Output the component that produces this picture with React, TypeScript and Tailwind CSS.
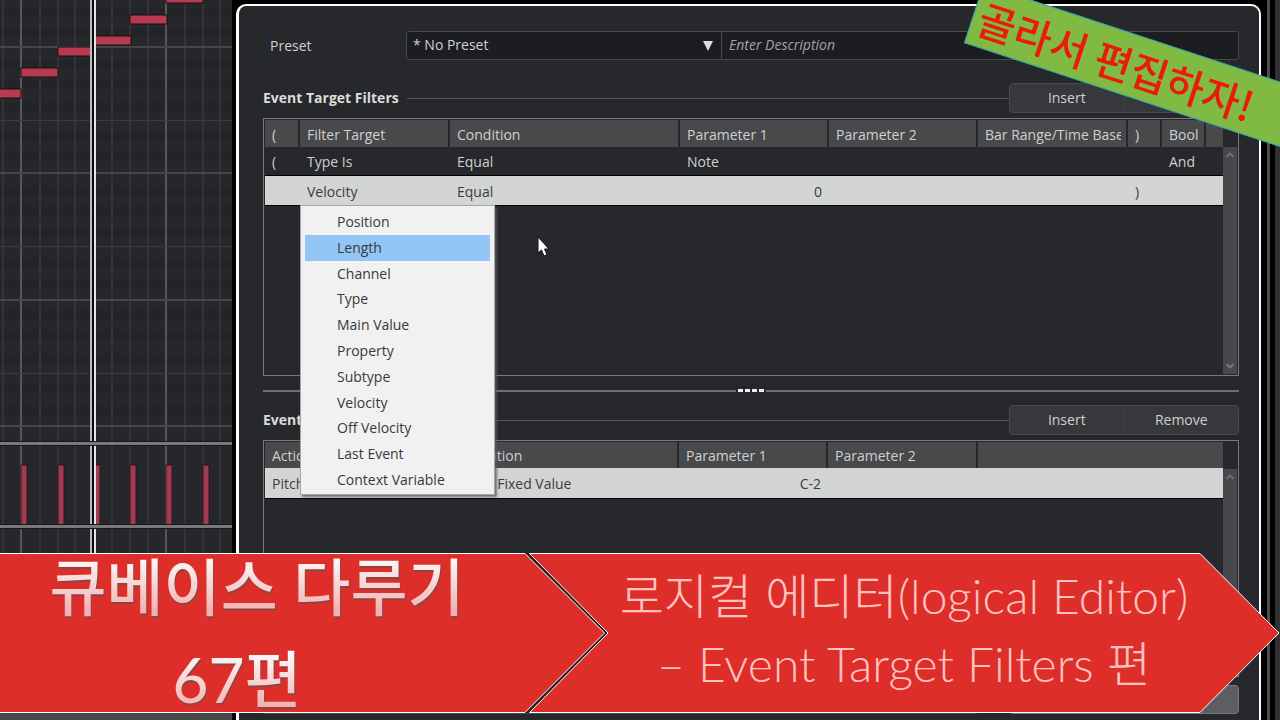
import React from "react";

const uiFont = "font-['Open_Sans','Noto_Sans_CJK_KR',sans-serif]";

const menuItems = [
  "Position",
  "Length",
  "Channel",
  "Type",
  "Main Value",
  "Property",
  "Subtype",
  "Velocity",
  "Off Velocity",
  "Last Event",
  "Context Variable",
];

const notes = [
  { x: -16, y: 89 },
  { x: 21, y: 68 },
  { x: 58, y: 47 },
  { x: 94, y: 36 },
  { x: 130, y: 15 },
  { x: 166, y: -6 },
];

const velocityBars = [21, 58, 94, 130, 166, 203];
const beatLines = [3, 40, 58, 75, 112, 130, 148, 185, 203, 220];
const barLines = [21, 166];
const rowShades = [8, 28, 60, 80, 102, 132, 152, 186, 206, 228, 258, 280, 310, 330, 354, 384, 406];

function PianoRoll() {
  return (
    <svg className="h-full w-[232px] shrink-0 bg-[#25272a]" aria-hidden="true">
      {rowShades.map((y) => (
        <rect key={y} x="0" y={y} width="232" height="9" fill="#222427" />
      ))}
      {beatLines.map((x) => (
        <rect key={x} x={x - 1} y="0" width="2" height="100%" fill="#323437" />
      ))}
      {barLines.map((x) => (
        <rect key={x} x={x - 1} y="0" width="2" height="100%" fill="#55575a" />
      ))}
      {[46, 172, 299, 425].map((y) => (
        <rect key={y} x="0" y={y} width="232" height="2" fill="#444649" />
      ))}
      {[120, 246, 373].map((y) => (
        <rect key={y} x="0" y={y} width="232" height="1" fill="#3a3c3f" />
      ))}
      {notes.map((n) => (
        <rect key={n.x} x={n.x} y={n.y} width="37" height="9" fill="#b73a52" stroke="#1c0d11" />
      ))}
      {velocityBars.map((x) => (
        <rect key={x} x={x} y="465" width="6" height="60" fill="#a03c50" stroke="#3a0f1a" />
      ))}
      <rect x="90" y="0" width="2" height="100%" fill="#b9babb" />
      <rect x="92" y="0" width="2" height="100%" fill="#0c0c0d" />
      <rect x="94" y="0" width="2" height="100%" fill="#e4e4e4" />
      {[442, 525].map((y) => (
        <g key={y}>
          <rect x="0" y={y - 1} width="232" height="5" fill="#17181a" />
          <rect x="0" y={y} width="232" height="3" fill="#77797d" />
        </g>
      ))}
      <rect x="0" y="712" width="232" height="100%" fill="#47494b" />
    </svg>
  );
}

function ScrollBar() {
  return (
    <div className="mt-[27px] flex w-[14px] shrink-0 flex-col items-center justify-between bg-[#46484b] py-1">
      <svg width="10" height="8" viewBox="0 0 10 8" fill="none" stroke="#6d6f72" strokeWidth="2">
        <path d="M1.500 6 5 2.500 8.500 6" />
      </svg>
      <svg width="10" height="8" viewBox="0 0 10 8" fill="none" stroke="#77797c" strokeWidth="2">
        <path d="M1.500 2 5 5.500 8.500 2" />
      </svg>
    </div>
  );
}

function SectionHeader({ title }: { title: string }) {
  return (
    <div className="flex h-[30px] items-center">
      <h2 className="font-bold text-[#dcdddd]">{title}</h2>
      <div className="ml-2 h-px flex-1 bg-[#54565a]" />
      <div className="flex h-[30px] w-[230px] rounded border border-[#48494c] bg-[#37383b]">
        <button className="flex-1 border-r border-[#414245] text-center">Insert</button>
        <button className="flex-1 text-center">Remove</button>
      </div>
    </div>
  );
}

function Head({ children, className = "" }: { children?: React.ReactNode; className?: string }) {
  return (
    <th
      className={
        "overflow-hidden bg-[#48494b] pt-[2px] pl-[7px] text-left font-normal whitespace-nowrap shadow-[inset_-2px_0_0_#27282b] last:shadow-none " +
        className
      }
    >
      <div className="mr-[7px] overflow-hidden">{children}</div>
    </th>
  );
}

function Cell({ children, right = false }: { children?: React.ReactNode; right?: boolean }) {
  return <td className={right ? "pt-[3px] pr-[7px] text-right" : "pt-[3px] pl-[7px]"}>{children}</td>;
}

function FilterTable() {
  return (
    <table className="w-full table-fixed border-collapse">
      <thead>
        <tr className="h-[27px]">
          <Head className="w-[35px]">(</Head>
          <Head className="w-[150px]">Filter Target</Head>
          <Head>Condition</Head>
          <Head className="w-[149px]">Parameter 1</Head>
          <Head className="w-[149px]">Parameter 2</Head>
          <Head className="w-[150px]">Bar Range/Time Base</Head>
          <Head className="w-[34px]">)</Head>
          <Head className="w-[44px]">Bool</Head>
          <Head className="w-[17px]" />
        </tr>
      </thead>
      <tbody>
        <tr className="h-[28px] border-b border-black">
          <Cell>(</Cell>
          <Cell>Type Is</Cell>
          <Cell>Equal</Cell>
          <Cell>Note</Cell>
          <Cell />
          <Cell />
          <Cell />
          <Cell>And</Cell>
          <Cell />
        </tr>
        <tr className="h-[30px] border-b border-black bg-[#d3d5d4] text-[#3a3b3d]">
          <Cell />
          <Cell>Velocity</Cell>
          <Cell>Equal</Cell>
          <Cell right>0</Cell>
          <Cell />
          <Cell />
          <Cell>)</Cell>
          <Cell />
          <Cell />
        </tr>
      </tbody>
    </table>
  );
}

function ActionTable() {
  return (
    <table className="w-full table-fixed border-collapse">
      <thead>
        <tr className="h-[26px]">
          <Head className="w-[184px]">Action Target</Head>
          <Head>Operation</Head>
          <Head className="w-[149px]">Parameter 1</Head>
          <Head className="w-[150px]">Parameter 2</Head>
          <Head className="w-[245px]" />
        </tr>
      </thead>
      <tbody>
        <tr className="h-[30px] border-b border-black bg-[#d3d5d4] text-[#3a3b3d]">
          <Cell>Pitch</Cell>
          <Cell>Set to Fixed Value</Cell>
          <Cell right>C-2</Cell>
          <Cell />
          <Cell />
        </tr>
      </tbody>
    </table>
  );
}

function TargetMenu() {
  return (
    <div
      role="listbox"
      aria-label="Filter Target"
      className="absolute top-[86px] left-[36px] z-10 flex h-[290px] w-[195px] flex-col border border-[#a5a6a7] bg-[#f1f1f2] px-1 pt-[3px] pb-px text-[#38393b] shadow-[2px_2px_2px_rgba(90,90,90,0.8)]"
    >
      {menuItems.map((item) => (
        <button
          key={item}
          role="option"
          aria-selected={item === "Length"}
          className="flex min-h-0 flex-1 items-center pl-8 text-left aria-selected:bg-[#93c5f7]"
        >
          {item}
        </button>
      ))}
    </div>
  );
}

function EditorDialog() {
  return (
    <main className="mt-1 ml-1 flex min-w-0 flex-1 flex-col rounded-t-[10px] border-2 border-b-0 border-l-3 border-white bg-[#26282b] pt-[25px] pr-5 pb-[6px] pl-6">
      <div className="flex h-[29px] shrink-0 items-center pl-[7px]">
        <label htmlFor="preset" className="w-[136px]">
          Preset
        </label>
        <div className="flex h-full min-w-0 flex-1 rounded-[3px] border border-[#48494c] bg-[#1c1d20]">
          <div className="relative flex w-[315px] border-r border-[#48494c]">
            <select id="preset" className="w-full appearance-none bg-transparent pb-px pl-[6px] outline-none">
              <option>* No Preset</option>
            </select>
            <svg
              className="pointer-events-none absolute top-[9px] right-2"
              width="10"
              height="10"
              viewBox="0 0 10 10"
              fill="#dddddd"
              aria-hidden="true"
            >
              <path d="M0 0H10L5 10Z" />
            </svg>
          </div>
          <input
            aria-label="Description"
            placeholder="Enter Description"
            className="min-w-0 flex-1 bg-transparent pb-px pl-[7px] italic outline-none placeholder:text-[#a2a3a5]"
          />
        </div>
      </div>

      <section className="mt-[23px]">
        <SectionHeader title="Event Target Filters" />
        <div className="relative mt-[5px] flex h-[258px] border border-[#77797d] p-px">
          <div className="min-w-0 flex-1">
            <FilterTable />
          </div>
          <ScrollBar />
          <TargetMenu />
        </div>
      </section>

      <div className="mt-[13px] flex h-[3px] shrink-0 items-center">
        <div className="h-[2px] flex-1 bg-[#6d6f73]" />
        <div className="flex gap-[2px] px-[2px]">
          <i className="h-[3px] w-[5px] bg-[#eeeeee]" />
          <i className="h-[3px] w-[5px] bg-[#eeeeee]" />
          <i className="h-[3px] w-[5px] bg-[#eeeeee]" />
          <i className="h-[3px] w-[5px] bg-[#eeeeee]" />
        </div>
        <div className="h-[2px] flex-1 bg-[#6d6f73]" />
      </div>

      <section className="mt-[13px] flex min-h-0 flex-1 flex-col">
        <SectionHeader title="Event Transform Actions" />
        <div className="mt-[5px] flex min-h-0 flex-1 border border-[#77797d] p-px">
          <div className="min-w-0 flex-1">
            <ActionTable />
          </div>
          <ScrollBar />
        </div>
      </section>

      <div className="mt-2 flex h-[29px] shrink-0 justify-between">
        <div className="w-[714px] border-b border-[#48494c]" />
        <button aria-label="Apply" className="w-[230px] rounded border border-[#77797c] bg-[#5c5e61]" />
      </div>
    </main>
  );
}

function TitleBanner() {
  return (
    <div className="absolute inset-x-0 bottom-[7px] z-20 h-40">
      <svg
        className="absolute inset-0 h-full w-full"
        viewBox="0 0 1280 160"
        preserveAspectRatio="none"
        aria-hidden="true"
      >
        <path d="M524 0H530L608 80 530 160H524Z" fill="#241a1c" />
        <path d="M-2 .5H525L604.500 80 525 159.500H-2Z" fill="#de2e29" stroke="#ffffff" />
        <path d="M529.500 .5H1200L1279 80 1200 159.500H529.500L608 80Z" fill="#de2e29" stroke="#ffffff" />
      </svg>
      <div className="relative flex h-full text-center">
        <h1 className="w-[514px] bg-[linear-gradient(180deg,#ffffff_0%,#f3adad_38%,#ffffff_60%,#f3adad_98%)] bg-clip-text font-['Lato','Noto_Sans_CJK_KR',sans-serif] text-[62px] leading-[92px] font-medium text-transparent drop-shadow-[1px_2px_0px_#8d4543]">
          <span className="-mt-3 block">큐베이스 다루기</span>
          <span className="block pr-10">67편</span>
        </h1>
        <p className="ml-[100px] w-[580px] pt-[9px] font-['Lato','Noto_Sans_CJK_KR',sans-serif] text-[48px] leading-[68px] font-light whitespace-nowrap text-[#ffc2c0]">
          로지컬 에디터(logical Editor)
          <br />– Event Target Filters 편
        </p>
      </div>
    </div>
  );
}

export default function App() {
  return (
    <div
      className={`relative flex h-screen min-h-[720px] overflow-hidden bg-black text-[14px] leading-5 text-[#cfd0d1] ${uiFont}`}
    >
      <PianoRoll />
      <EditorDialog />
      <div className="flex w-[19px] shrink-0 justify-end gap-[5px]">
        <div className="w-[3px] bg-[#4b4c4e]" />
        <div className="w-[5px] bg-[#303133]" />
      </div>
      <div className="absolute -top-[19px] -right-[84px] z-20 flex h-[62px] w-[400px] origin-bottom-left rotate-[18.2deg] items-center border border-[#2aa5b8] bg-[#80ba42] pl-[6px] font-['Noto_Sans_CJK_KR',sans-serif] text-[41px] font-medium whitespace-nowrap text-[#e81c0c]">
        골라서 편집하자!
      </div>
      <svg
        className="absolute top-[236px] left-[537px] z-20"
        width="14"
        height="22"
        viewBox="0 0 14 22"
        fill="#ffffff"
        stroke="#111111"
        aria-hidden="true"
      >
        <path d="M1 1V17L4.500 14 7 20 10 18.500 7.500 13H12Z" />
      </svg>
      <TitleBanner />
    </div>
  );
}
